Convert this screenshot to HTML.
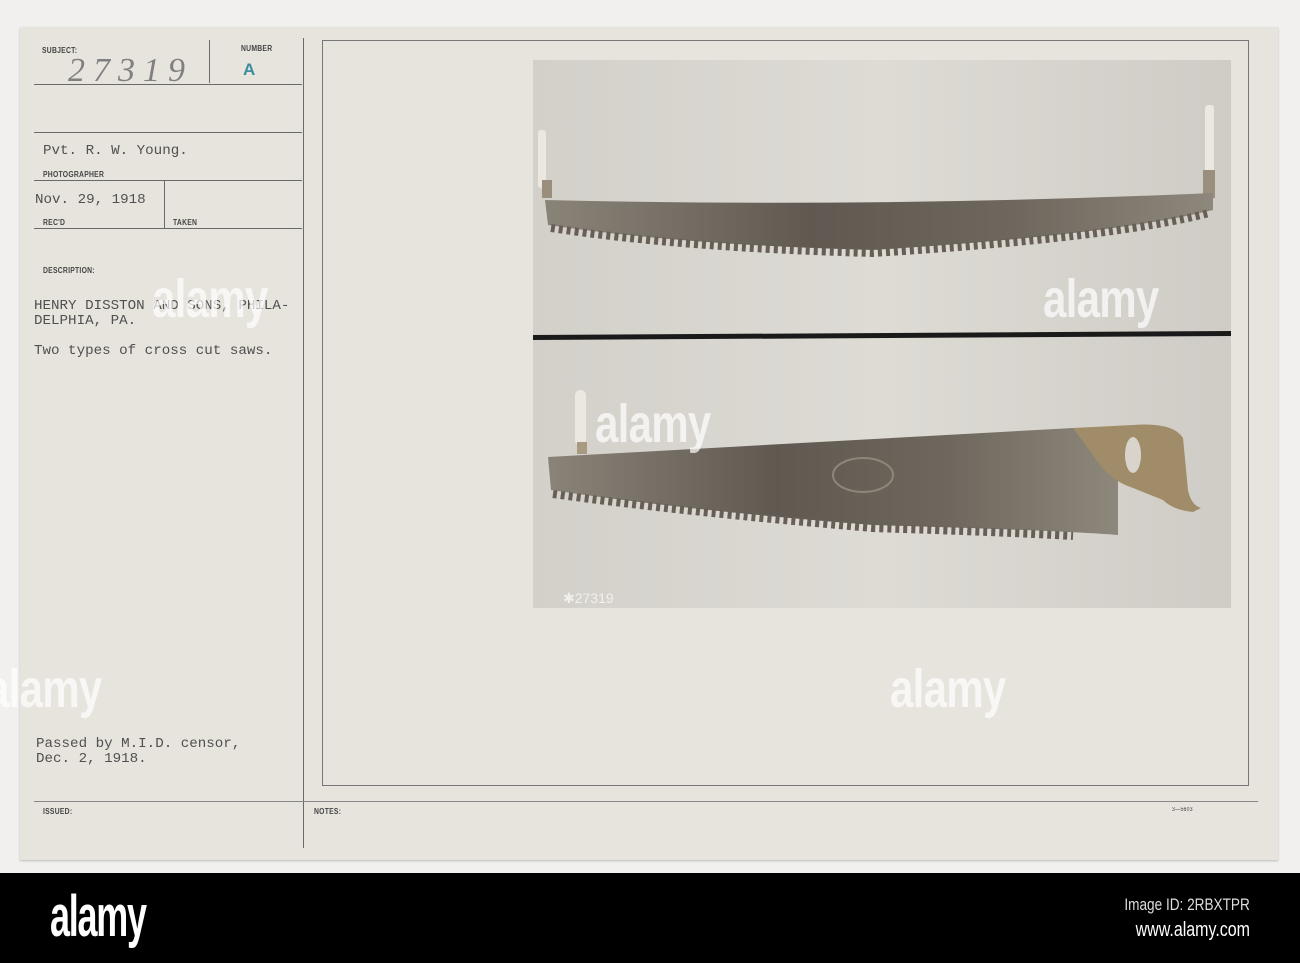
<!DOCTYPE html>
<html><head><meta charset="utf-8"><style>
body{margin:0;width:1300px;height:963px;background:#f1f0ee;position:relative;overflow:hidden;font-family:"Liberation Sans",sans-serif}
.card{position:absolute;left:20px;top:27px;width:1258px;height:833px;background:#e7e4de;box-shadow:0 1px 2px #bbb}
.a{position:absolute;background:#6a6a6a}
.lbl{position:absolute;font-size:8px;font-weight:bold;color:#444;letter-spacing:.3px;transform:scaleX(.85);transform-origin:left}
.tw{position:absolute;font-family:"Liberation Mono",monospace;font-size:14.2px;line-height:15px;color:#505050;white-space:pre}
.wm{position:absolute;color:rgba(255,255,255,.7);font-weight:bold;font-size:54px;transform:scaleX(.78);transform-origin:left;letter-spacing:-1px}
.bar{position:absolute;left:0;top:873px;width:1300px;height:90px;background:#000}
</style></head><body>
<div class="card"></div>
<div class="a" style="left:34px;top:84px;width:268px;height:1px"></div>
<div class="a" style="left:34px;top:132px;width:268px;height:1px"></div>
<div class="a" style="left:34px;top:180px;width:268px;height:1px"></div>
<div class="a" style="left:34px;top:228px;width:268px;height:1px"></div>
<div class="a" style="left:209px;top:40px;width:1px;height:43px"></div>
<div class="a" style="left:164px;top:181px;width:1px;height:47px"></div>
<div class="a" style="left:303px;top:38px;width:1px;height:810px"></div>
<div class="a" style="left:34px;top:801px;width:1224px;height:1px;background:#888"></div>
<div style="position:absolute;left:322px;top:40px;width:925px;height:744px;border:1px solid #777"></div>
<div class="lbl" style="left:42px;top:46px">SUBJECT:</div>
<div class="lbl" style="left:241px;top:44px">NUMBER</div>
<div style="position:absolute;left:68px;top:52px;font-family:'Liberation Serif',serif;font-style:italic;font-size:34px;color:#808080;letter-spacing:8px">27319</div>
<div style="position:absolute;left:243px;top:60px;font-weight:bold;font-size:17px;color:#3a8ea0">A</div>
<div class="tw" style="left:43px;top:144px">Pvt. R. W. Young.</div>
<div class="lbl" style="left:43px;top:170px">PHOTOGRAPHER</div>
<div class="tw" style="left:35px;top:193px">Nov. 29, 1918</div>
<div class="lbl" style="left:43px;top:218px">REC'D</div>
<div class="lbl" style="left:173px;top:218px">TAKEN</div>
<div class="lbl" style="left:43px;top:266px">DESCRIPTION:</div>
<div class="tw" style="left:34px;top:299px">HENRY DISSTON AND SONS, PHILA-
DELPHIA, PA.

Two types of cross cut saws.</div>
<div class="tw" style="left:36px;top:737px">Passed by M.I.D. censor,
Dec. 2, 1918.</div>
<div class="lbl" style="left:43px;top:807px">ISSUED:</div>
<div class="lbl" style="left:314px;top:807px">NOTES:</div>
<div class="lbl" style="left:1172px;top:807px;font-weight:normal;font-size:6px">3—5603</div>
<svg style="position:absolute;left:533px;top:60px" width="698" height="548" viewBox="0 0 698 548">
<defs><linearGradient id="g" x1="0" x2="1"><stop offset="0" stop-color="#d3d0ca"/><stop offset=".5" stop-color="#dedbd5"/><stop offset="1" stop-color="#cfccc6"/></linearGradient>
<linearGradient id="b" x1="0" x2="1"><stop offset="0" stop-color="#8a8378"/><stop offset=".4" stop-color="#5f5951"/><stop offset=".7" stop-color="#6e675d"/><stop offset="1" stop-color="#8d877c"/></linearGradient></defs>
<rect width="698" height="548" fill="url(#g)"/>
<path d="M0 275 L698 271 L698 276 L0 280Z" fill="#1a1a1a"/>
<rect x="5" y="70" width="8" height="58" rx="3" fill="#ece8df"/>
<rect x="9" y="120" width="10" height="18" fill="#9a8f7c"/>
<rect x="672" y="45" width="9" height="78" rx="3" fill="#ece8df"/>
<rect x="670" y="110" width="12" height="28" fill="#9a8f7c"/>
<path d="M12 140 Q340 148 680 133 L680 150 Q580 175 340 190 Q150 185 15 165Z" fill="url(#b)"/>
<path d="M18 168 Q150 188 340 193 Q580 178 676 153" fill="none" stroke="#675f55" stroke-width="8" stroke-dasharray="4 4"/>
<rect x="42" y="330" width="11" height="55" rx="5" fill="#ece8df"/>
<rect x="44" y="382" width="10" height="12" fill="#a89a80"/>
<path d="M15 397 L540 368 L565 372 L585 385 L585 475 Q520 470 340 465 Q150 450 18 430Z" fill="url(#b)"/>
<path d="M20 434 Q150 452 340 468 Q470 472 540 476" fill="none" stroke="#675f55" stroke-width="8" stroke-dasharray="4 4"/>
<path d="M540 368 L600 365 Q640 362 650 378 L655 430 Q658 445 668 448 L660 452 Q640 450 630 440 L600 428 Q575 420 560 395Z" fill="#a08c68"/>
<ellipse cx="600" cy="395" rx="8" ry="18" fill="#d8d4cc"/>
<ellipse cx="330" cy="415" rx="30" ry="17" fill="none" stroke="#8e8779" stroke-width="2"/>
<text x="30" y="543" font-size="14" fill="#f2f0ec" font-family="Liberation Sans">✱27319</text>
</svg>
<div class="wm" style="left:152px;top:268px">alamy</div>
<div class="wm" style="left:1043px;top:268px">alamy</div>
<div class="wm" style="left:595px;top:393px">alamy</div>
<div class="wm" style="left:-14px;top:658px">alamy</div>
<div class="wm" style="left:890px;top:658px">alamy</div>
<div class="bar"></div>
<div style="position:absolute;left:50px;top:883px;color:#fff;font-weight:bold;font-size:58px;transform:scaleX(.62);transform-origin:left;letter-spacing:-2px">alamy</div>
<div style="position:absolute;right:50px;top:895px;color:#ddd;font-size:17px;transform:scaleX(.8);transform-origin:right">Image ID: 2RBXTPR</div>
<div style="position:absolute;right:50px;top:919px;color:#fff;font-size:20px;transform:scaleX(.8);transform-origin:right">www.alamy.com</div>
</body></html>
